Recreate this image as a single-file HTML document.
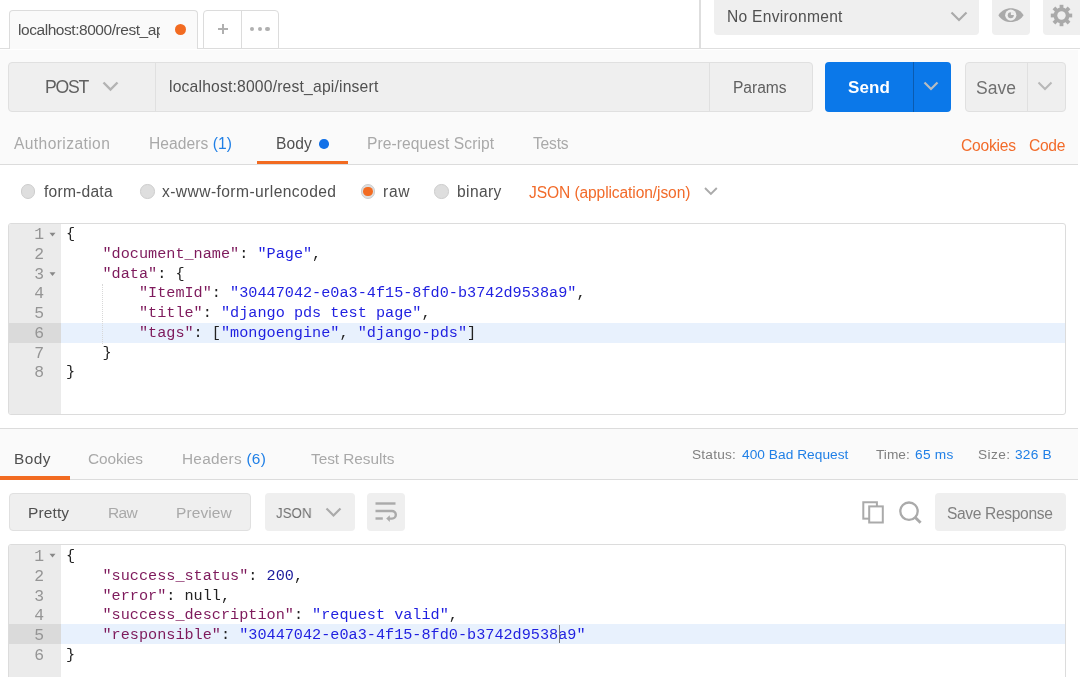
<!DOCTYPE html>
<html><head><meta charset="utf-8">
<style>
*{box-sizing:border-box;margin:0;padding:0}
html,body{width:1080px;height:677px;overflow:hidden;background:#fff;font-family:"Liberation Sans",sans-serif;position:relative}
.a{position:absolute}
.t{position:absolute;white-space:pre;line-height:1;will-change:transform}
.g{background:#efefef}
.gray{color:#a9a9a9}
.dk{color:#505050}
.blue{color:#1f7fe6}
.or{color:#f26b2a}
.chev{position:absolute}
pre{font-family:"Liberation Mono",monospace;}
.code{position:absolute;will-change:transform;font-family:"Liberation Mono",monospace;font-size:15.2px;line-height:19.77px;white-space:pre;color:#222}
.k{color:#7e1a5c}
.s{color:#1f1fe0}
.n{color:#1a1a9c}
.ln{position:absolute;will-change:transform;font-family:"Liberation Mono",monospace;font-size:16.4px;line-height:19.77px;color:#959595;text-align:right;white-space:pre}
</style></head><body>

<!-- ===== header ===== -->
<div class="a" style="left:0;top:0;width:1080px;height:48px;background:#fff"></div>
<div class="a" style="left:0;top:48px;width:1080px;height:116px;background:#fafafa"></div>
<div class="a" style="left:0;top:48px;width:1080px;height:1px;background:#dedede"></div>
<div class="a" style="left:0;top:49px;width:1080px;height:1px;background:#fff"></div>
<!-- active tab -->
<div class="a" style="left:9px;top:10px;width:189px;height:39px;background:#fafafa;border:1px solid #dcdcdc;border-bottom:none;border-radius:4px 4px 0 0"></div>
<div class="a" style="left:10px;top:11px;width:150px;height:36px;overflow:hidden"><div class="a" style="left:-10px;top:-11px"><div class="t" style="left:18.2px;top:21.9px;font-size:15.5px;letter-spacing:-0.45px;color:#505050;font-weight:400">localhost:8000/rest_api/insert</div></div></div>
<div class="a" style="left:174.5px;top:23.5px;width:11px;height:11px;border-radius:50%;background:#f26b21"></div>
<!-- + ... -->
<div class="a" style="left:203px;top:10px;width:76px;height:39px;background:#fff;border:1px solid #dcdcdc;border-radius:4px 4px 0 0"></div>
<div class="a" style="left:241px;top:11px;width:1px;height:37px;background:#dcdcdc"></div>
<div class="a" style="left:218px;top:28px;width:10px;height:2px;background:#b0b0b0"></div>
<div class="a" style="left:222px;top:24px;width:2px;height:10px;background:#b0b0b0"></div>
<div class="a" style="left:249.7px;top:26.9px;width:4.6px;height:4.6px;border-radius:50%;background:#b0b0b0"></div>
<div class="a" style="left:257.5px;top:26.9px;width:4.6px;height:4.6px;border-radius:50%;background:#b0b0b0"></div>
<div class="a" style="left:265.3px;top:26.9px;width:4.6px;height:4.6px;border-radius:50%;background:#b0b0b0"></div>
<!-- divider -->
<div class="a" style="left:699px;top:0;width:2px;height:48px;background:#dedede"></div>
<!-- env -->
<div class="a g" style="left:713.5px;top:0;width:265.5px;height:35px;border-radius:0 0 4px 4px"></div>
<div class="t" style="left:726.5px;top:8.8px;font-size:15.6px;letter-spacing:0.279px;color:#505050;font-weight:400">No Environment</div>
<svg class="a" style="left:949px;top:10px" width="20" height="13"><path d="M2.5 2.5 L10 10 L17.5 2.5" fill="none" stroke="#aaa" stroke-width="2.2"/></svg>
<div class="a g" style="left:992px;top:0;width:38px;height:35px;border-radius:0 0 4px 4px"></div>
<svg class="a" style="left:996px;top:5px" width="30" height="20" viewBox="0 0 30 20"><path d="M2.4 10.15 C8 0.9 21.6 0.9 27.6 10.15 C21.6 19.4 8 19.4 2.4 10.15Z" fill="#aaa"/><circle cx="14.76" cy="10.15" r="5.6" fill="#efefef"/><circle cx="14.76" cy="10.3" r="3" fill="#aaa"/><path d="M14.9 10.1 V6.9 A3.2 3.2 0 0 1 18.1 10.1Z" fill="#efefef"/></svg>
<div class="a g" style="left:1042.5px;top:0;width:40px;height:35px;border-radius:0 0 0 4px"></div>
<svg class="a" style="left:1049.75px;top:4.3px" width="23" height="23" viewBox="-11.5 -11.5 23 23">
<g fill="#aaa"><circle r="7.9"/>
<rect x="-1.9" y="-10.7" width="3.8" height="21.4"/>
<rect x="-1.9" y="-10.7" width="3.8" height="21.4" transform="rotate(45)"/>
<rect x="-1.9" y="-10.7" width="3.8" height="21.4" transform="rotate(90)"/>
<rect x="-1.9" y="-10.7" width="3.8" height="21.4" transform="rotate(135)"/></g>
<circle r="4.2" fill="#efefef"/></svg>

<!-- ===== url row ===== -->
<div class="a g" style="left:8px;top:62px;width:805px;height:50px;border:1px solid #e0e0e0;border-radius:4px"></div>
<div class="a" style="left:155px;top:63px;width:1px;height:48px;background:#e0e0e0"></div>
<div class="a" style="left:709px;top:63px;width:1px;height:48px;background:#e0e0e0"></div>
<div class="t" style="left:44.6px;top:78.71px;font-size:17.6px;letter-spacing:-1.199px;color:#606060;font-weight:400">POST</div>
<svg class="a" style="left:101px;top:80px" width="19" height="13"><path d="M2.5 2.5 L9.5 9.5 L16.5 2.5" fill="none" stroke="#b3b3b3" stroke-width="2.4"/></svg>
<div class="t" style="left:168.9px;top:79.0px;font-size:15.7px;letter-spacing:0.179px;color:#505050;font-weight:400">localhost:8000/rest_api/insert</div>
<div class="t" style="left:733.1px;top:80.0px;font-size:15.6px;letter-spacing:-0.04px;color:#606060;font-weight:400">Params</div>
<div class="a" style="left:825px;top:62px;width:126px;height:50px;background:#0b78e9;border-radius:4px"></div>
<div class="a" style="left:913px;top:62px;width:1px;height:50px;background:#0a5bb0"></div>
<div class="t" style="left:848px;top:79.0px;font-size:17px;letter-spacing:0.102px;color:#ffffff;font-weight:700">Send</div>
<svg class="a" style="left:922px;top:80px" width="18" height="12"><path d="M2.5 2.5 L9 9 L15.5 2.5" fill="none" stroke="#b8bcc0" stroke-width="2.2"/></svg>
<div class="a g" style="left:965px;top:62px;width:101px;height:50px;border:1px solid #e0e0e0;border-radius:4px"></div>
<div class="a" style="left:1027px;top:63px;width:1px;height:48px;background:#e0e0e0"></div>
<div class="t" style="left:975.5px;top:80.0px;font-size:17.5px;letter-spacing:0.034px;color:#707070;font-weight:400">Save</div>
<svg class="a" style="left:1036px;top:80px" width="18" height="12"><path d="M2.5 2.5 L9 9 L15.5 2.5" fill="none" stroke="#b8b8b8" stroke-width="2"/></svg>

<!-- ===== request tabs ===== -->
<div class="t" style="left:14.1px;top:135.6px;font-size:15.6px;letter-spacing:0.399px;color:#a9a9a9;font-weight:400">Authorization</div>
<div class="t" style="left:149.2px;top:135.5px;font-size:15.6px;letter-spacing:0.07px;color:#a9a9a9;font-weight:400">Headers <span style="color:#1f7fe6">(1)</span></div>
<div class="t" style="left:276px;top:135.5px;font-size:15.6px;letter-spacing:0.102px;color:#505050;font-weight:400">Body</div>
<div class="a" style="left:319px;top:139.3px;width:9.5px;height:9.5px;border-radius:50%;background:#1271e8"></div>
<div class="t" style="left:366.5px;top:135.5px;font-size:15.6px;letter-spacing:0.084px;color:#a9a9a9;font-weight:400">Pre-request Script</div>
<div class="t" style="left:532.9px;top:135.5px;font-size:15.6px;letter-spacing:-0.2px;color:#a9a9a9;font-weight:400">Tests</div>
<div class="t" style="left:960.8px;top:137.5px;font-size:15.6px;letter-spacing:-0.199px;color:#f26b2a;font-weight:400">Cookies</div>
<div class="t" style="left:1028.8px;top:137.5px;font-size:15.6px;letter-spacing:-0.299px;color:#f26b2a;font-weight:400">Code</div>
<div class="a" style="left:0;top:164px;width:1080px;height:1px;background:#dcdcdc"></div>
<div class="a" style="left:257px;top:161px;width:91px;height:3px;background:#f26b21"></div>

<!-- ===== radio row ===== -->
<div class="a" style="left:20.8px;top:184px;width:14.5px;height:14.5px;border-radius:50%;background:#dedede;border:1px solid #cdcdcd"></div>
<div class="t" style="left:43.8px;top:183.9px;font-size:15.6px;letter-spacing:0.234px;color:#505050;font-weight:400">form-data</div>
<div class="a" style="left:140px;top:184px;width:14.5px;height:14.5px;border-radius:50%;background:#dedede;border:1px solid #cdcdcd"></div>
<div class="t" style="left:161.5px;top:183.9px;font-size:15.6px;letter-spacing:0.425px;color:#505050;font-weight:400">x-www-form-urlencoded</div>
<div class="a" style="left:360.8px;top:184px;width:14.5px;height:14.5px;border-radius:50%;background:#dedede;border:1px solid #cdcdcd"></div>
<div class="a" style="left:363.3px;top:186.5px;width:9.5px;height:9.5px;border-radius:50%;background:#f26b21"></div>
<div class="t" style="left:382.5px;top:183.9px;font-size:15.6px;letter-spacing:0.7px;color:#505050;font-weight:400">raw</div>
<div class="a" style="left:434.3px;top:184px;width:14.5px;height:14.5px;border-radius:50%;background:#dedede;border:1px solid #cdcdcd"></div>
<div class="t" style="left:456.5px;top:183.9px;font-size:15.6px;letter-spacing:0.38px;color:#505050;font-weight:400">binary</div>
<div class="t" style="left:528.6px;top:184.5px;font-size:15.6px;letter-spacing:-0.109px;color:#f26b2a;font-weight:400">JSON (application/json)</div>
<svg class="a" style="left:701.5px;top:185.3px" width="19" height="13"><path d="M3 3 L8.9 8.9 L14.8 3" fill="none" stroke="#aaa" stroke-width="1.9"/></svg>

<!-- ===== request editor ===== -->
<div class="a" style="left:8px;top:223px;width:1058px;height:192px;border:1px solid #dcdcdc;border-radius:3px;overflow:hidden;background:#fff">
  <div class="a" style="left:0;top:0;width:52px;height:192px;background:#ebebeb"></div>
  <div class="a" style="left:52px;top:99.2px;width:1006px;height:19.77px;background:#e8f1fd"></div>
  <div class="a" style="left:0;top:99.2px;width:52px;height:19.77px;background:#dadada"></div>
  <div class="a" style="left:93px;top:60.3px;width:0;height:59.3px;border-left:1px dotted #d8d8d8"></div>
</div>
<div class="ln" style="left:9px;top:224.8px;width:35px">1
2
3
4
5
6
7
8</div>
<svg class="a" style="left:49px;top:232px" width="8" height="50"><path d="M0.5 0.8 H6.5 L3.5 4.6Z" fill="#888"/><path d="M0.5 40.3 H6.5 L3.5 44.1Z" fill="#888"/></svg>
<div class="code" style="left:66.2px;top:225.3px">{
    <span class="k">"document_name"</span>: <span class="s">"Page"</span>,
    <span class="k">"data"</span>: {
        <span class="k">"ItemId"</span>: <span class="s">"30447042-e0a3-4f15-8fd0-b3742d9538a9"</span>,
        <span class="k">"title"</span>: <span class="s">"django pds test page"</span>,
        <span class="k">"tags"</span>: [<span class="s">"mongoengine"</span>, <span class="s">"django-pds"</span>]
    }
}</div>

<!-- ===== response tabs ===== -->
<div class="a" style="left:0;top:428px;width:1080px;height:52px;background:#fafafa;border-top:1px solid #dcdcdc;border-bottom:1px solid #dcdcdc"></div>
<div class="a" style="left:0;top:476px;width:69.5px;height:3.5px;background:#f26b21"></div>
<div class="t" style="left:13.6px;top:450.5px;font-size:15.4px;letter-spacing:0.468px;color:#505050;font-weight:400">Body</div>
<div class="t" style="left:87.8px;top:450.5px;font-size:15.4px;letter-spacing:-0.101px;color:#a9a9a9;font-weight:400">Cookies</div>
<div class="t" style="left:181.8px;top:450.5px;font-size:15.4px;letter-spacing:0.25px;color:#a9a9a9;font-weight:400">Headers <span style="color:#1f7fe6">(6)</span></div>
<div class="t" style="left:310.5px;top:450.5px;font-size:15.4px;letter-spacing:-0.045px;color:#a9a9a9;font-weight:400">Test Results</div>
<div class="t" style="left:692.2px;top:448.1px;font-size:13.7px;letter-spacing:0.199px;color:#808080;font-weight:400">Status:</div>
<div class="t" style="left:741.7px;top:448.1px;font-size:13.7px;letter-spacing:0.045px;color:#1f7fe6;font-weight:400">400 Bad Request</div>
<div class="t" style="left:875.8px;top:448.1px;font-size:13.7px;letter-spacing:0.0px;color:#808080;font-weight:400">Time:</div>
<div class="t" style="left:914.8px;top:448.1px;font-size:13.7px;letter-spacing:0.275px;color:#1f7fe6;font-weight:400">65 ms</div>
<div class="t" style="left:978.4px;top:448.1px;font-size:13.7px;letter-spacing:0.375px;color:#808080;font-weight:400">Size:</div>
<div class="t" style="left:1015.1px;top:448.1px;font-size:13.7px;letter-spacing:0.225px;color:#1f7fe6;font-weight:400">326 B</div>

<!-- ===== response toolbar ===== -->
<div class="a g" style="left:8.5px;top:493px;width:242.5px;height:38px;border:1px solid #e0e0e0;border-radius:4px"></div>
<div class="t" style="left:28.1px;top:505.4px;font-size:15.5px;letter-spacing:0.12px;color:#505050;font-weight:400">Pretty</div>
<div class="t" style="left:107.8px;top:505.4px;font-size:15.5px;letter-spacing:-0.7px;color:#a9a9a9;font-weight:400">Raw</div>
<div class="t" style="left:175.5px;top:505.4px;font-size:15.5px;letter-spacing:0.101px;color:#a9a9a9;font-weight:400">Preview</div>
<div class="a g" style="left:265px;top:493px;width:89.5px;height:38px;border-radius:4px"></div>
<div class="t" style="left:276.3px;top:505.0px;font-size:15.5px;letter-spacing:0px;color:#707070;font-weight:400;transform:scaleX(0.86);transform-origin:0 0">JSON</div>
<svg class="a" style="left:324px;top:505.8px" width="19" height="13"><path d="M2.5 2.5 L9.5 9.5 L16.5 2.5" fill="none" stroke="#aaa" stroke-width="2.2"/></svg>
<div class="a g" style="left:367px;top:493px;width:38px;height:38px;border-radius:4px"></div>
<svg class="a" style="left:367px;top:493px" width="38" height="38"><g fill="none" stroke="#aaa" stroke-width="2.4"><path d="M8.5 10.5 H28.5"/><path d="M8.5 25.5 H15.8"/><path d="M8.5 18 H25 A3.8 3.8 0 0 1 25 25.6 H21.5"/></g><path d="M19.2 25.6 L22.8 22.3 L22.8 28.9Z" fill="#aaa"/></svg>
<svg class="a" style="left:855px;top:495px" width="75" height="35"><g fill="none" stroke="#aaa" stroke-width="2"><rect x="8.3" y="7.25" width="13.6" height="16.4"/><rect x="14.2" y="11.4" width="13.6" height="16.1" fill="#fff"/></g><g fill="none" stroke="#aaa"><circle cx="54" cy="16.2" r="8.7" stroke-width="2.3"/><path d="M60 22.2 L65.6 27.8" stroke-width="2.9"/></g></svg>
<div class="a g" style="left:935px;top:493px;width:130.5px;height:38px;border-radius:4px"></div>
<div class="t" style="left:946.5px;top:505.6px;font-size:15.6px;letter-spacing:-0.351px;color:#808080;font-weight:400">Save Response</div>

<!-- ===== response editor ===== -->
<div class="a" style="left:8px;top:544px;width:1058px;height:150px;border:1px solid #dcdcdc;border-radius:3px;overflow:hidden;background:#fff">
  <div class="a" style="left:0;top:0;width:52px;height:150px;background:#ebebeb"></div>
  <div class="a" style="left:52px;top:79.4px;width:1006px;height:19.77px;background:#e8f1fd"></div>
  <div class="a" style="left:0;top:79.4px;width:52px;height:19.77px;background:#dadada"></div>
</div>
<div class="ln" style="left:9px;top:547px;width:35px">1
2
3
4
5
6</div>
<svg class="a" style="left:49px;top:553px" width="8" height="10"><path d="M0.5 0.8 H6.5 L3.5 4.6Z" fill="#888"/></svg>
<div class="code" style="left:66.2px;top:546.6px">{
    <span class="k">"success_status"</span>: <span class="n">200</span>,
    <span class="k">"error"</span>: null,
    <span class="k">"success_description"</span>: <span class="s">"request valid"</span>,
    <span class="k">"responsible"</span>: <span class="s">"30447042-e0a3-4f15-8fd0-b3742d9538a9"</span>
}</div>
<div class="a" style="left:558.5px;top:625px;width:1px;height:18px;background:#777"></div>

<div class="a" style="left:1078px;top:50px;width:2px;height:627px;background:#fff"></div>
</body></html>
